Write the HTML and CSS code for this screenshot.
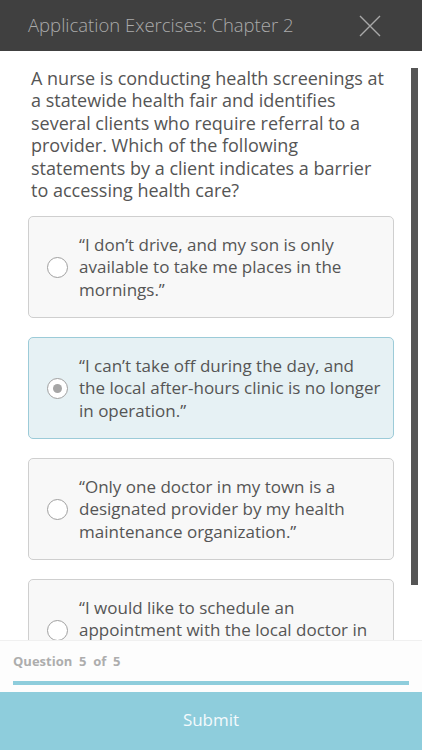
FILE: index.html
```html
<!DOCTYPE html>
<html lang="en">
<head>
    <meta charset="UTF-8">
    <title>Application Exercises</title>
    <link rel="stylesheet" href="styles.css">
</head>
<body>
    <div class="screen">
        <div class="topBar">
            <p class="topTitle">Application Exercises: Chapter 2</p>
            <svg class="closeIcon" width="22" height="22" viewBox="0 0 22 22">
                <path d="M1 1 L21 21 M21 1 L1 21" stroke="#a8a8a8" stroke-width="1.4" fill="none"/>
            </svg>
        </div>
        <div class="content">
            <p class="question">A nurse is conducting health screenings at a statewide health fair and identifies several clients who require referral to a provider. Which of the following statements by a client indicates a barrier to accessing health care?</p>
            <div class="option">
                <span class="radio"></span>
                <p class="optionText">&ldquo;I don&rsquo;t drive, and my son is only available to take me places in the mornings.&rdquo;</p>
            </div>
            <div class="option selected">
                <span class="radio"><span class="dot"></span></span>
                <p class="optionText">&ldquo;I can&rsquo;t take off during the day, and the local after-hours clinic is no longer in operation.&rdquo;</p>
            </div>
            <div class="option">
                <span class="radio"></span>
                <p class="optionText">&ldquo;Only one doctor in my town is a designated provider by my health maintenance organization.&rdquo;</p>
            </div>
            <div class="option">
                <span class="radio"></span>
                <p class="optionText">&ldquo;I would like to schedule an appointment with the local doctor in my town, but I do not have a ride.&rdquo;</p>
            </div>
            <div class="scrollThumb"></div>
        </div>
        <div class="footer">
            <div class="progressBlock">
                <p class="progressLabel">Question&nbsp; 5&nbsp; of&nbsp; 5</p>
                <div class="progressBar"></div>
            </div>
            <div class="submitButton">Submit</div>
        </div>
    </div>
</body>
</html>
```

FILE: styles.css
```css
*{
    margin: 0;
    padding: 0;
    box-sizing: border-box;
}
body{
    font-family: "Open Sans", "Noto Sans", sans-serif;
    background-color: #ffffff;
}
.screen{
    width: 422px;
    height: 750px;
    display: flex;
    flex-direction: column;
    overflow: hidden;
}
.topBar{
    height: 51px;
    flex-shrink: 0;
    background-color: #404040;
    display: flex;
    align-items: center;
    justify-content: space-between;
    padding: 0 41px 0 28px;
}
.topTitle{
    font-size: 18.5px;
    font-weight: 300;
    color: #ababab;
    padding-bottom: 2px;
}
.closeIcon{
    display: block;
}
.content{
    position: relative;
    flex: 1;
    overflow: hidden;
    padding: 16px 28px 0 28px;
}
.question{
    font-size: 18px;
    line-height: 22.4px;
    color: #555555;
    padding: 0 4px 0 3px;
    margin-bottom: 15px;
}
.option{
    width: 366px;
    height: 102px;
    border: 1px solid #cfcfcf;
    border-radius: 5px;
    background-color: #f8f8f8;
    display: flex;
    align-items: center;
    padding: 0 10px 0 18px;
    margin-bottom: 19px;
}
.option.selected{
    background-color: #e6f1f4;
    border-color: #9ccbd8;
}
.radio{
    width: 21px;
    height: 21px;
    flex-shrink: 0;
    border: 1px solid #a0a0a0;
    border-radius: 50%;
    background-color: #ffffff;
    display: flex;
    align-items: center;
    justify-content: center;
    margin-right: 11px;
}
.dot{
    width: 9px;
    height: 9px;
    border-radius: 50%;
    background-color: #a6a6a6;
}
.optionText{
    font-size: 17px;
    line-height: 22.4px;
    color: #555555;
}
.scrollThumb{
    position: absolute;
    left: 411px;
    top: 17px;
    width: 7px;
    height: 517px;
    background-color: #555555;
}
.footer{
    flex-shrink: 0;
}
.progressBlock{
    height: 52px;
    background-color: #fdfdfd;
    border-top: 1px solid #f0f0f0;
    padding: 12px 13px 0 13px;
}
.progressLabel{
    font-size: 13px;
    font-weight: bold;
    color: #adadad;
    line-height: 16px;
}
.progressBar{
    height: 4px;
    margin-top: 12px;
    background-color: #8ecddc;
}
.submitButton{
    height: 58px;
    background-color: #8ecddc;
    color: #f4fafc;
    font-size: 17px;
    text-align: center;
    line-height: 56px;
}
```
